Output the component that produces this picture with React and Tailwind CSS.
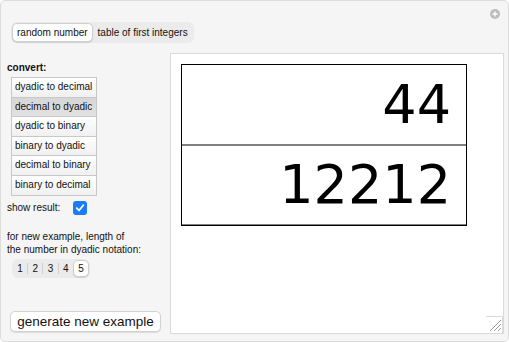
import React, { useState } from 'react'

const modes = [
  'dyadic to decimal',
  'decimal to dyadic',
  'dyadic to binary',
  'binary to dyadic',
  'decimal to binary',
  'binary to decimal',
]

export default function App() {
  const [tab, setTab] = useState(0)
  const [mode, setMode] = useState(1)
  const [show, setShow] = useState(true)
  const [len, setLen] = useState(5)

  return (
    <div className="h-[342px] w-[509px] overflow-hidden rounded-[5px] border border-[#dcdcdc] bg-[#f5f5f5] font-['Liberation_Sans',Arial,sans-serif] text-[10px] text-[#111]">
      <div className="relative flex h-[52px] items-start pl-[10px] pt-[21px]">
        <div className="flex h-[21px] items-center rounded-[6px] bg-[#ebebeb] p-[1px]">
          {['random number', 'table of first integers'].map((t, i) => (
            <button
              key={t}
              onClick={() => setTab(i)}
              className={
                'h-[19px] rounded-[5px] px-[4px] leading-none ' +
                (tab === i ? 'border border-[#cfcfcf] bg-white shadow-[0_1px_1px_rgba(0,0,0,0.12)]' : 'border border-transparent')
              }
            >
              {t}
            </button>
          ))}
        </div>
        <div className="absolute right-[8px] top-[8px] flex h-[10px] w-[10px] items-center justify-center rounded-full bg-[#bdbdbd]">
          <svg width="6" height="6" viewBox="0 0 6 6">
            <path d="M3 0.5v5M0.5 3h5" stroke="white" strokeWidth="1.4" />
          </svg>
        </div>
      </div>

      <div className="flex">
        <div className="flex w-[169px] flex-col pl-[6px]">
          <div className="mt-[9px] h-[12px] font-bold leading-[12px]">convert:</div>
          <div className="ml-[4px] mt-[3px] flex w-[86px] flex-col border border-[#c8c8c8]">
            {modes.map((m, i) => (
              <button
                key={m}
                onClick={() => setMode(i)}
                className={
                  'flex h-[19.5px] items-center border-b border-[#c8c8c8] px-[3px] text-left leading-none last:border-b-0 ' +
                  (mode === i
                    ? 'bg-gradient-to-b from-[#d6d6d6] to-[#e2e2e2]'
                    : 'bg-gradient-to-b from-[#ffffff] to-[#f0f0f0]')
                }
              >
                {m}
              </button>
            ))}
          </div>
          <div className="mt-[4px] flex h-[15px] items-center">
            <span className="w-[66px]">show result:</span>
            <button
              onClick={() => setShow(!show)}
              className={
                'flex h-[14px] w-[14px] items-center justify-center rounded-[3px] ' +
                (show ? 'bg-[#1b7cf4]' : 'border border-[#bbb] bg-white')
              }
            >
              {show && (
                <svg width="10" height="10" viewBox="0 0 10 10">
                  <path d="M1.8 5.2 4 7.5 8.3 2.3" fill="none" stroke="white" strokeWidth="1.8" strokeLinecap="round" strokeLinejoin="round" />
                </svg>
              )}
            </button>
          </div>
          <div className="mt-[16px] leading-[12.5px]">
            for new example, length of
            <br />
            the number in dyadic notation:
          </div>
          <div className="ml-[5px] mt-[3px] flex h-[19px] w-[78px] items-center rounded-[6px] bg-[#ebebeb] p-[1px]">
            {[1, 2, 3, 4, 5].map((n, i) => (
              <React.Fragment key={n}>
                {i > 0 && len !== n && len !== n - 1 && <div className="h-[11px] w-px bg-[#cfcfcf]" />}
                <button
                  onClick={() => setLen(n)}
                  className={
                    'h-[17px] flex-1 rounded-[5px] leading-none ' +
                    (len === n ? 'border border-[#cfcfcf] bg-white shadow-[0_1px_1px_rgba(0,0,0,0.12)]' : '')
                  }
                >
                  {n}
                </button>
              </React.Fragment>
            ))}
          </div>
          <button className="ml-[3px] mt-[33px] h-[21px] w-[151px] rounded-[5px] border border-[#d2d2d2] bg-white text-[13.5px] leading-none shadow-[0_1px_1px_rgba(0,0,0,0.1)]">
            generate new example
          </button>
        </div>

        <div className="relative h-[281px] w-[334px] border border-[#dadada] bg-white pl-[10px] pt-[10px]">
          <div className="w-[286px] border border-black font-['DejaVu_Sans',sans-serif] text-[54px] leading-none text-black">
            <div className="flex h-[81px] items-center justify-end border-b-2 border-[#808080] pr-[15px]">
              44
            </div>
            <div className="flex h-[79px] items-center justify-end border-b border-[#808080] pr-[15px]">
              12212
            </div>
          </div>
          <svg className="absolute bottom-0 right-0" width="17" height="17" viewBox="0 0 17 17">
            <path d="M0 0.5H16.5V17" fill="none" stroke="#dadada" />
            <path d="M4 15 15 4M8 15 15 8M12 15 15 12" stroke="#9a9a9a" strokeWidth="1" />
          </svg>
        </div>
      </div>
    </div>
  )
}
